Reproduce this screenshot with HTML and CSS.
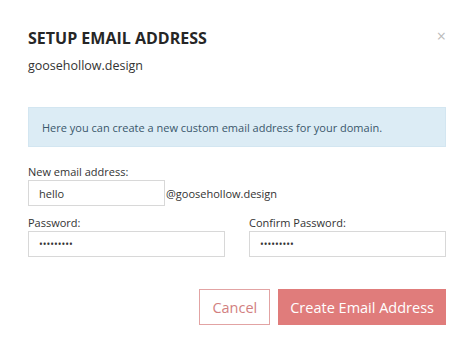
FILE: index.html
```html
<!DOCTYPE html>
<html lang="en">
<head>
    <meta charset="UTF-8">
    <meta name="viewport" content="width=device-width, initial-scale=1.0">
    <title>Setup Email Address</title>
    <link rel="stylesheet" href="styles.css">
</head>
<body>
    <div class="modal">
        <div class="modal-header">
            <h2 class="title">SETUP EMAIL ADDRESS</h2>
            <span class="close">&times;</span>
        </div>
        <p class="domain">goosehollow.design</p>

        <div class="info">Here you can create a new custom email address for your domain.</div>

        <form id="emailForm">
            <div class="form-group">
                <label for="address">New email address:</label>
                <div class="address-row">
                    <input type="text" id="address" class="input-short" value="hello">
                    <span class="suffix">@goosehollow.design</span>
                </div>
            </div>
            <div class="form-row">
                <div class="form-group">
                    <label for="password">Password:</label>
                    <input type="password" id="password" value="123456789">
                </div>
                <div class="form-group">
                    <label for="confirm">Confirm Password:</label>
                    <input type="password" id="confirm" value="123456789">
                </div>
            </div>
            <div class="actions">
                <button type="button" class="btn btn-cancel">Cancel</button>
                <button type="button" class="btn btn-create">Create Email Address</button>
            </div>
        </form>
    </div>
</body>
</html>
```

FILE: styles.css
```css
body {
    font-family: "Open Sans", Arial, sans-serif;
    background-color: white;
    color: #333;
    margin: 0;
}
.modal {
    padding: 28px 28px 0 28px;
}
.modal-header {
    display: flex;
    justify-content: space-between;
    align-items: flex-start;
}
.title {
    margin: 0;
    font-size: 16px;
    line-height: 20px;
    font-weight: bold;
    color: #262626;
}
.close {
    color: #bbb;
    font-size: 16px;
    line-height: 16px;
    margin-top: 0;
}
.domain {
    margin: 9px 0 0 0;
    font-size: 12.5px;
    line-height: 18px;
    color: #333;
}
.info {
    margin-top: 32px;
    height: 40px;
    background-color: #dcecf5;
    border: 1px solid #d3e6f1;
    box-sizing: border-box;
    padding: 0 13px;
    display: flex;
    align-items: center;
    font-size: 11px;
    color: #3a576b;
}
form {
    margin-top: 18px;
}
.form-group label {
    display: block;
    font-size: 11px;
    line-height: 14px;
    color: #333;
    margin-bottom: 1px;
}
.address-row {
    display: flex;
    align-items: center;
}
.suffix {
    font-size: 11px;
    color: #333;
    margin-left: 1px;
}
input[type="text"], input[type="password"] {
    width: 100%;
    height: 26px;
    padding: 0 10px;
    border: 1px solid #d8d8d8;
    box-sizing: border-box;
    font-family: "Open Sans", Arial, sans-serif;
    font-size: 11px;
    color: #333;
    outline: none;
}
input[type="password"] {
    font-size: 10px;
}
.input-short {
    width: 137px !important;
}
.form-row {
    display: grid;
    grid-template-columns: 1fr 1fr;
    column-gap: 24px;
    margin-top: 10px;
}
.actions {
    display: flex;
    justify-content: flex-end;
    gap: 8px;
    margin-top: 32px;
}
.btn {
    height: 36px;
    padding: 0 11px;
    font-family: "Open Sans", Arial, sans-serif;
    font-size: 14.5px;
    border-radius: 0;
    cursor: pointer;
}
.btn-cancel {
    padding: 0 12px;
    background-color: white;
    border: 1px solid #e2a3a3;
    color: #d27f7f;
}
.btn-create {
    background-color: #e07c7b;
    border: 1px solid #e07c7b;
    color: white;
}
```
